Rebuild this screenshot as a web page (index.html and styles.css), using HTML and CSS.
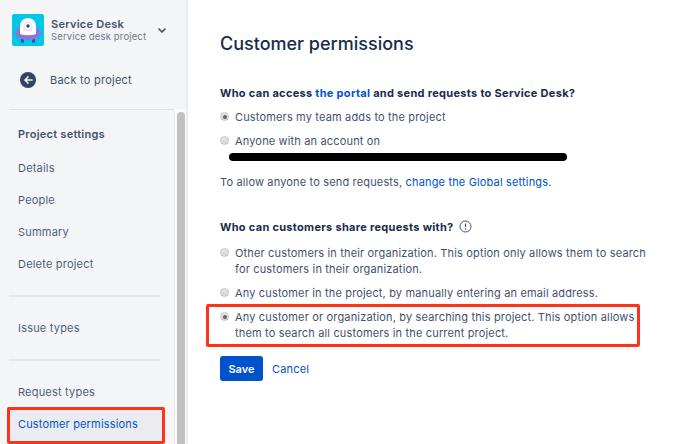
FILE: index.html
```html
<!DOCTYPE html>
<html lang="en">
<head>
<meta charset="utf-8">
<title>Customer permissions</title>
<link rel="stylesheet" href="styles.css">
</head>
<body>
<div class="page">
  <aside class="sidebar">
    <div class="project">
      <svg class="logo" width="32" height="32" viewBox="0 0 32 32">
        <rect width="32" height="32" rx="2" fill="#00c7e5"/>
        <path d="M9 25h3v3.500H9zM20 25h3v3.500h-3z" fill="#5243aa"/>
        <ellipse cx="16" cy="19" rx="13" ry="7" fill="#8777d9"/>
        <path d="M8 20V12a8 8 0 0 1 16 0v8a10 3 0 0 1-16 0z" fill="#fff"/>
        <path d="M11.500 17v-5a4.500 4.500 0 0 1 9 0v5z" fill="#c0b6f2" opacity=".35"/>
        <circle cx="16" cy="12" r="3" fill="#fff"/>
        <circle cx="16" cy="12" r="1.700" fill="#403294"/>
      </svg>
      <div class="project-text">
        <div class="project-name">Service Desk</div>
        <div class="project-type">Service desk project</div>
      </div>
      <svg class="chevron" width="10" height="7" viewBox="0 0 10 7"><path d="M2 2l3 3 3-3" fill="none" stroke="#42526e" stroke-width="1.700" stroke-linecap="round" stroke-linejoin="round"/></svg>
    </div>
    <div class="back">
      <svg width="16" height="16" viewBox="0 0 16 16"><circle cx="8" cy="8" r="8" fill="#344563"/><path d="M12 8H5M8 5L5 8l3 3" fill="none" stroke="#f4f5f7" stroke-width="1.700" stroke-linecap="round" stroke-linejoin="round"/></svg>
      <span>Back to project</span>
    </div>
    <div class="nav-wrap">
      <nav class="nav">
        <div class="nav-title">Project settings</div>
        <div class="nav-item">Details</div>
        <div class="nav-item">People</div>
        <div class="nav-item">Summary</div>
        <div class="nav-item">Delete project</div>
        <hr class="nav-sep">
        <div class="nav-item">Issue types</div>
        <hr class="nav-sep">
        <div class="nav-item">Request types</div>
        <div class="nav-item active">Customer permissions<span class="mark mark-nav"></span></div>
      </nav>
      <div class="scrollbar"><div class="thumb"></div></div>
    </div>
  </aside>
  <main class="content">
    <h1>Customer permissions</h1>
    <section class="group">
      <h2>Who can access <a href="#">the portal</a> and send requests to Service Desk?</h2>
      <label class="opt"><span class="radio on"></span><span>Customers my team adds to the project</span></label>
      <label class="opt"><span class="radio"></span><span>Anyone with an account on</span></label>
      <div class="redacted"></div>
      <p class="note">To allow anyone to send requests, <a href="#">change the Global settings</a>.</p>
    </section>
    <section class="group second">
      <h2>Who can customers share requests with?
        <svg class="info" width="13" height="13" viewBox="0 0 13 13"><circle cx="6.500" cy="6.500" r="5.500" fill="none" stroke="#42526e" stroke-width="1"/><path d="M6.500 3.500v3.500" stroke="#42526e" stroke-width="1.200"/><circle cx="6.500" cy="9" r=".8" fill="#42526e"/></svg>
      </h2>
      <label class="opt"><span class="radio"></span><span>Other customers in their organization. This option only allows them to search<br>for customers in their organization.</span></label>
      <label class="opt"><span class="radio"></span><span>Any customer in the project, by manually entering an email address.</span></label>
      <label class="opt marked"><span class="radio on"></span><span>Any customer or organization, by searching this project. This option allows<br>them to search all customers in the current project.</span><span class="mark mark-opt"></span></label>
    </section>
    <div class="actions">
      <button class="save" type="button">Save</button>
      <a href="#" class="cancel">Cancel</a>
    </div>
  </main>
</div>
</body>
</html>
```
FILE: styles.css
```css
* { box-sizing: border-box; }
html, body { margin: 0; height: 100%; overflow: hidden; }
body {
  background: #fff;
  color: #42526e;
  font-family: Inter, "Liberation Sans", sans-serif;
  font-size: 11px;
  letter-spacing: .16px;
}
a { color: #0052cc; text-decoration: none; }
.page { display: flex; height: 444px; }
.sidebar {
  width: 188px;
  flex: none;
  background: #f4f5f7;
  border-right: 2px solid #ebecf0;
  display: flex;
  flex-direction: column;
}
.project { display: flex; align-items: center; height: 32px; margin: 14px 0 0 12px; }
.logo { flex: none; margin-right: 7px; }
.project-text { width: 102px; }
.project-name { font-size: 11px; font-weight: 600; color: #42526e; line-height: 13px; letter-spacing: .25px; }
.project-type { font-size: 9.500px; color: #6b778c; line-height: 11px; letter-spacing: .15px; }
.chevron { margin-left: 4px; }
.back { display: flex; align-items: center; gap: 14px; margin: 26px 0 0 20px; height: 16px; font-size: 11px; color: #42526e; letter-spacing: .25px; }
.nav-wrap { display: flex; flex: 1; margin-top: 21px; min-height: 0; }
.nav { width: 165px; margin-left: 9px; border-top: 1px solid #dfe1e6; padding-top: 16px; flex: none; letter-spacing: .2px; }
.nav-title { font-weight: 600; color: #42526e; line-height: 16px; padding-left: 9px; margin-bottom: 10px; letter-spacing: .25px; }
.nav-item { position: relative; width: 153px; height: 32px; line-height: 32px; padding-left: 9px; color: #505f79; }
.nav-item.active { color: #0052cc; background: #ebecf0; border-radius: 3px; letter-spacing: .16px; }
.nav-sep { border: 0; width: 151px; height: 2px; background: #e4e6ea; margin: 15px 0; }
.scrollbar { width: 12px; background: #fafafa; border-left: 1px solid #ececec; flex: none; }
.thumb { width: 8px; margin: 3px 0 0 2px; height: 340px; border-radius: 4px 4px 0 0; background: #c1c1c1; }
.content { flex: 1; padding: 33px 0 0 32px; min-width: 0; }
h1 { margin: 0 0 30px; font-size: 18px; font-weight: 500; line-height: 22px; color: #172b4d; letter-spacing: 0; }
h2 { margin: 0 0 8px; font-size: 11px; font-weight: 700; line-height: 16px; color: #172b4d; letter-spacing: .3px; }
h2 a { font-weight: 700; }
.group { width: 440px; }
.second { margin-top: 29px; }
.second h2 { margin-bottom: 10px; }
.info { vertical-align: -2px; margin-left: 3px; }
.opt { position: relative; display: flex; align-items: flex-start; line-height: 16px; margin-bottom: 8px; color: #42526e; }
.radio { flex: none; width: 9px; height: 9px; margin: 3px 6px 0 0; border-radius: 50%; background: linear-gradient(#e8e8e8, #d4d4d4); border: 1px solid #c4c4c4; position: relative; }
.radio.on::after { content: ""; position: absolute; inset: 1.500px; border-radius: 50%; background: #666; }
.redacted { width: 338px; height: 8px; border-radius: 4px; background: #000; margin: -4px 0 13px 9px; }
.note { margin: 0; line-height: 16px; }
.marked { margin-bottom: 0; }
.mark { position: absolute; border: 3px solid #ff3319; border-radius: 2px; pointer-events: none; }
.mark-opt { left: -14px; top: -5px; width: 434px; height: 43px; }
.mark-nav { left: -2px; top: -1px; width: 158px; height: 37px; }
.actions { display: flex; align-items: center; gap: 9px; margin-top: 15px; }
.save { width: 43px; height: 25px; border: 0; border-radius: 3px; background: #0052cc; color: #fff; font: 600 11px Inter, "Liberation Sans", sans-serif; padding: 0; }
.cancel { font-size: 11px; }
```
